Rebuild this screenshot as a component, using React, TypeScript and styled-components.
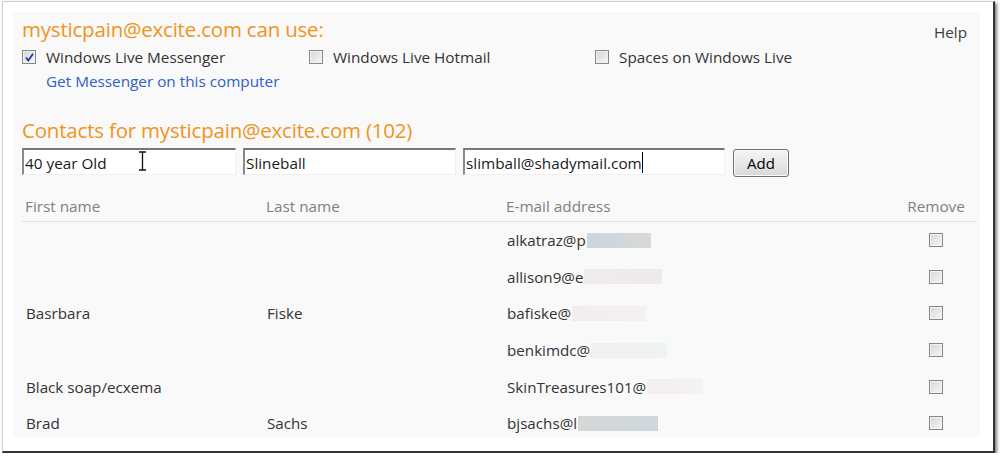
import styled, { createGlobalStyle } from 'styled-components'

const GlobalStyle = createGlobalStyle`
  html, body {
    margin: 0;
    padding: 0;
    background: #ffffff;
  }
  body {
    font-family: 'Open Sans', 'Noto Sans', sans-serif;
    color: #333333;
  }
`

type Contact = {
  first: string
  last: string
  email: string
  hiddenWidth: number
  hiddenTone: string
}

const contacts: Contact[] = [
  { first: '', last: '', email: 'alkatraz@p', hiddenWidth: 64, hiddenTone: 'linear-gradient(90deg, #c9d6de, #d9d9d9)' },
  { first: '', last: '', email: 'allison9@e', hiddenWidth: 78, hiddenTone: 'linear-gradient(90deg, #f1ebeb, #eeeaea)' },
  { first: 'Basrbara', last: 'Fiske', email: 'bafiske@', hiddenWidth: 74, hiddenTone: 'linear-gradient(90deg, #f2ecec, #f5f1f1)' },
  { first: '', last: '', email: 'benkimdc@', hiddenWidth: 76, hiddenTone: 'linear-gradient(90deg, #f0f0f0, #eef3f5)' },
  { first: 'Black soap/ecxema', last: '', email: 'SkinTreasures101@', hiddenWidth: 56, hiddenTone: 'linear-gradient(90deg, #f4eeee, #f4f2f2)' },
  { first: 'Brad', last: 'Sachs', email: 'bjsachs@l', hiddenWidth: 80, hiddenTone: 'linear-gradient(90deg, #d6d6d6, #cdd8de)' },
]

function CheckBox({ checked }: { checked?: boolean }) {
  return (
    <Box>
      {checked && (
        <svg width="11" height="11" viewBox="0 0 11 11">
          <path d="M2 5.5 L4.3 8.5 L9 1.8" fill="none" stroke="#24369a" strokeWidth="1.8" />
        </svg>
      )}
    </Box>
  )
}

export default function App() {
  return (
    <>
      <GlobalStyle />
      <Frame>
        <Panel>
          <TopRow>
            <Title>mysticpain@excite.com can use:</Title>
            <Help>Help</Help>
          </TopRow>

          <Services>
            <Service>
              <CheckBox checked />
              <span>Windows Live Messenger</span>
            </Service>
            <Service>
              <CheckBox />
              <span>Windows Live Hotmail</span>
            </Service>
            <Service>
              <CheckBox />
              <span>Spaces on Windows Live</span>
            </Service>
          </Services>
          <Link href="#">Get Messenger on this computer</Link>

          <Title $spaced>Contacts for mysticpain@excite.com (102)</Title>

          <Form>
            <Field $width={214}>
              40 year Old
              <Beam width="9" height="20" viewBox="0 0 9 20">
                <path d="M1 1 H8 M4.5 1 V19 M1 19 H8" stroke="#111" strokeWidth="1.3" fill="none" />
              </Beam>
            </Field>
            <Field $width={213}>Slineball</Field>
            <Field $width={262}>
              slimball@shadymail.com
              <Caret />
            </Field>
            <AddButton>Add</AddButton>
          </Form>

          <HeadRow>
            <HeadCell>First name</HeadCell>
            <HeadCell>Last name</HeadCell>
            <HeadCell>E-mail address</HeadCell>
            <HeadCell $center>Remove</HeadCell>
          </HeadRow>

          {contacts.map((c) => (
            <Row key={c.email}>
              <Cell>{c.first}</Cell>
              <Cell>{c.last}</Cell>
              <Cell>
                {c.email}
                <Hidden style={{ width: c.hiddenWidth, background: c.hiddenTone }} />
              </Cell>
              <Cell $center>
                <CheckBox />
              </Cell>
            </Row>
          ))}
        </Panel>
      </Frame>
    </>
  )
}

const Frame = styled.div`
  box-sizing: border-box;
  width: 993px;
  height: 452px;
  margin: 1px 0 0 2px;
  padding: 10px 13px 14px 10px;
  display: flex;
  background: #ffffff;
  border-top: 1px solid #cfcfcf;
  border-left: 1px solid #cfcfcf;
  border-right: 2px solid #333333;
  border-bottom: 2px solid #333333;
  box-shadow: 2px 2px 3px rgba(0, 0, 0, 0.5);
`

const Panel = styled.div`
  flex: 1;
  display: flex;
  flex-direction: column;
  padding: 4px 3px 0 9px;
  background: #f9f9f9;
  overflow: hidden;
`

const TopRow = styled.div`
  display: flex;
  justify-content: space-between;
  align-items: flex-start;
  padding-right: 10px;
`

const Title = styled.h2<{ $spaced?: boolean }>`
  margin: ${(p) => (p.$spaced ? '24px 0 5px' : '0')};
  font-size: 20.5px;
  line-height: 26px;
  font-weight: 400;
  color: #f0941d;
  letter-spacing: -0.2px;
`

const Help = styled.a`
  margin-top: 6px;
  font-size: 15.3px;
  line-height: 20px;
  color: #3c3c3c;
`

const Services = styled.div`
  display: grid;
  grid-template-columns: 287px 286px 1fr;
  margin-top: 4px;
`

const Service = styled.label`
  display: flex;
  align-items: center;
  gap: 10px;
  font-size: 15.3px;
  line-height: 22px;
  color: #333333;
`

const Box = styled.span`
  box-sizing: border-box;
  width: 14px;
  height: 14px;
  display: inline-flex;
  align-items: center;
  justify-content: center;
  flex-shrink: 0;
  border: 1px solid #878888;
  background: linear-gradient(135deg, #d6d6d6, #f7f7f7);
  box-shadow: inset 0 0 0 1px #f2f2f2;
`

const Link = styled.a`
  align-self: flex-start;
  margin: 1px 0 0 24px;
  font-size: 15.3px;
  line-height: 24px;
  color: #2f5fc9;
  text-decoration: none;
`

const Form = styled.div`
  display: flex;
  align-items: flex-start;
  gap: 7px;
`

const Field = styled.div<{ $width: number }>`
  position: relative;
  box-sizing: border-box;
  width: ${(p) => p.$width}px;
  height: 27px;
  padding: 1px 0 0 1px;
  display: flex;
  align-items: center;
  background: #ffffff;
  border-top: 2px solid #777777;
  border-left: 2px solid #8a8a8a;
  border-right: 1px solid #f0f0f0;
  border-bottom: 1px solid #f0f0f0;
  font-size: 15.3px;
  color: #1a1a1a;
`

const Beam = styled.svg`
  position: absolute;
  left: 114px;
  top: 1px;
`

const Caret = styled.span`
  width: 1px;
  height: 21px;
  background: #000000;
`

const AddButton = styled.button`
  box-sizing: border-box;
  width: 56px;
  height: 28px;
  margin: 1px 0 0 1px;
  border: 1px solid #707070;
  border-radius: 3px;
  background: linear-gradient(#f4f4f4, #e8e8e8 50%, #d8d8d8);
  box-shadow: inset 0 0 0 1px #fbfbfb;
  font-family: 'Open Sans', sans-serif;
  font-size: 15px;
  color: #000000;
`

const HeadRow = styled.div`
  display: grid;
  grid-template-columns: 241px 240px 1fr 58px;
  margin-top: 19px;
  padding: 0 12px 5px 0;
  border-bottom: 1px solid #e4e4e4;
`

const HeadCell = styled.div<{ $center?: boolean }>`
  padding-left: ${(p) => (p.$center ? '0' : '3px')};
  text-align: ${(p) => (p.$center ? 'center' : 'left')};
  font-size: 15.3px;
  line-height: 20px;
  color: #808080;
`

const Row = styled.div`
  display: grid;
  grid-template-columns: 241px 240px 1fr 58px;
  height: 36.6px;
  align-items: center;
  padding-right: 12px;
  flex-shrink: 0;
`

const Cell = styled.div<{ $center?: boolean }>`
  display: flex;
  align-items: center;
  justify-content: ${(p) => (p.$center ? 'center' : 'flex-start')};
  padding-left: ${(p) => (p.$center ? '0' : '4px')};
  font-size: 15.2px;
  color: #333333;
`

const Hidden = styled.span`
  display: inline-block;
  height: 15px;
  margin-left: 1px;
`
